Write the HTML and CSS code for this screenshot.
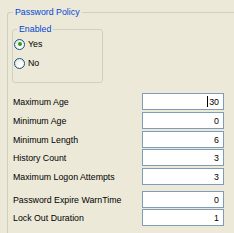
FILE: index.html
```html
<!DOCTYPE html>
<html>
<head>
<meta charset="utf-8">
<link rel="stylesheet" href="styles.css">
</head>
<body>
<fieldset class="group outer">
  <legend>Password Policy</legend>
  <fieldset class="group inner">
    <legend>Enabled</legend>
    <div class="radio"><span class="dot checked"></span><span>Yes</span></div>
    <div class="radio"><span class="dot"></span><span>No</span></div>
  </fieldset>
  <div class="form">
    <div class="row"><span class="label">Maximum Age</span><span class="box"><span class="caret"></span>30</span></div>
    <div class="row"><span class="label">Minimum Age</span><span class="box">0</span></div>
    <div class="row"><span class="label">Minimum Length</span><span class="box">6</span></div>
    <div class="row tight"><span class="label">History Count</span><span class="box">3</span></div>
    <div class="row"><span class="label">Maximum Logon Attempts</span><span class="box">3</span></div>
    <div class="row wide"><span class="label">Password Expire WarnTime</span><span class="box">0</span></div>
    <div class="row tight"><span class="label">Lock Out Duration</span><span class="box">1</span></div>
  </div>
</fieldset>
</body>
</html>
```
FILE: styles.css
```css
html, body {
  margin: 0;
  height: 233px;
  overflow: hidden;
  background: #ECE9D8;
}
body {
  font-family: "Liberation Sans", Arial, sans-serif;
  font-size: 8.8px;
  color: #000;
}
.group {
  border: 1px solid #D0D0BF;
  border-radius: 3px;
  min-width: 0;
}
.group > legend {
  padding: 0 2px;
  line-height: 11px;
  color: #0046D5;
}
.outer {
  margin: 7px 0 0 7px;
  padding: 0 0 8px 4px;
  border-right: none;
  border-bottom: none;
  border-radius: 3px 0 0 0;
}
.outer > legend {
  margin-left: 1px;
}
.inner {
  margin: 6px 0 0 0;
  width: 91px;
  box-sizing: border-box;
  padding: 0 0 10px 1px;
}
.inner > legend {
  margin-left: 3px;
}
.radio {
  display: flex;
  align-items: center;
  gap: 3px;
  height: 18px;
}
.radio + .radio {
  margin-top: 1px;
}
.dot {
  position: relative;
  width: 11px;
  height: 11px;
  box-sizing: border-box;
  border: 1px solid #1C5180;
  border-radius: 50%;
  background: radial-gradient(circle at 65% 65%, #ffffff 20%, #dcdcd5 100%);
}
.dot.checked::after {
  content: "";
  position: absolute;
  left: 2.5px;
  top: 2.5px;
  width: 4px;
  height: 4px;
  border-radius: 50%;
  background: #21A121;
}
.form {
  margin-top: 10px;
}
.row {
  display: grid;
  grid-template-columns: 130px 82px;
  align-items: center;
  height: 17px;
  margin-top: 2px;
}
.row:first-child {
  margin-top: 0;
}
.row.tight {
  margin-top: 1px;
}
.row.wide {
  margin-top: 6px;
}
.label {
  padding-left: 1px;
  white-space: nowrap;
}
.box {
  height: 17px;
  box-sizing: border-box;
  border: 1px solid #7F9DB9;
  background: #fff;
  display: flex;
  align-items: center;
  justify-content: flex-end;
  padding-right: 4px;
}
.caret {
  width: 1px;
  height: 11px;
  background: #000;
  margin-right: 1px;
}
```
